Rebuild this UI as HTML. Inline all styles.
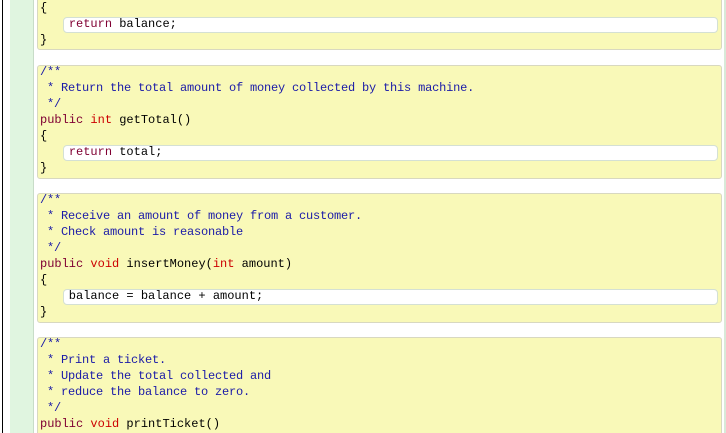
<!DOCTYPE html>
<html style="overflow:hidden;height:433px"><head><style>
body{margin:0;width:726px;height:433px;background:#fff;position:relative;overflow:hidden;font-family:"Liberation Mono",monospace;font-size:12px}
.bl{position:absolute;left:2px;top:0;width:1px;height:433px;background:#000}
.gr{position:absolute;left:10px;top:0;width:23px;height:433px;background:#e0f5e0;border-right:1px solid #c8dcc8}
.rg{position:absolute;left:724px;top:0;width:2px;height:433px;background:#d8ead8}
.box{position:absolute;left:37px;width:683px;background:#f9f9b8;border:1px solid #d8d8c0;border-radius:3px}
.in{position:absolute;left:63px;width:653px;height:14px;background:#fff;border:1px solid #d4e0d4;border-radius:4px}
.l{position:absolute;left:40px;white-space:pre;line-height:16px;color:#000}
.c{color:#1a1aa8;letter-spacing:-0.2px}.k{color:#800033}.t{color:#cc0000}
</style></head><body>
<div class="bl"></div><div class="gr"></div><div class="rg"></div>
<div class="box" style="top:-5px;height:53px"></div>
<div class="in" style="top:17px"></div>
<div class="l" style="top:0px">{</div>
<div class="l" style="top:16px">    <span class="k">return</span> balance;</div>
<div class="l" style="top:32px">}</div>

<div class="box" style="top:65px;height:112px"></div>
<div class="in" style="top:145px"></div>
<div class="l c" style="top:64px">/**</div>
<div class="l c" style="top:80px"> * Return the total amount of money collected by this machine.</div>
<div class="l c" style="top:96px"> */</div>
<div class="l" style="top:112px"><span class="k">public</span> <span class="t">int</span> getTotal()</div>
<div class="l" style="top:128px">{</div>
<div class="l" style="top:144px">    <span class="k">return</span> total;</div>
<div class="l" style="top:160px">}</div>

<div class="box" style="top:193px;height:128px"></div>
<div class="in" style="top:289px"></div>
<div class="l c" style="top:192px">/**</div>
<div class="l c" style="top:208px"> * Receive an amount of money from a customer.</div>
<div class="l c" style="top:224px"> * Check amount is reasonable</div>
<div class="l c" style="top:240px"> */</div>
<div class="l" style="top:256px"><span class="k">public</span> <span class="t">void</span> insertMoney(<span class="t">int</span> amount)</div>
<div class="l" style="top:272px">{</div>
<div class="l" style="top:288px">    balance = balance + amount;</div>
<div class="l" style="top:304px">}</div>

<div class="box" style="top:337px;height:100px"></div>
<div class="l c" style="top:336px">/**</div>
<div class="l c" style="top:352px"> * Print a ticket.</div>
<div class="l c" style="top:368px"> * Update the total collected and</div>
<div class="l c" style="top:384px"> * reduce the balance to zero.</div>
<div class="l c" style="top:400px"> */</div>
<div class="l" style="top:416px"><span class="k">public</span> <span class="t">void</span> printTicket()</div>
</body></html>
